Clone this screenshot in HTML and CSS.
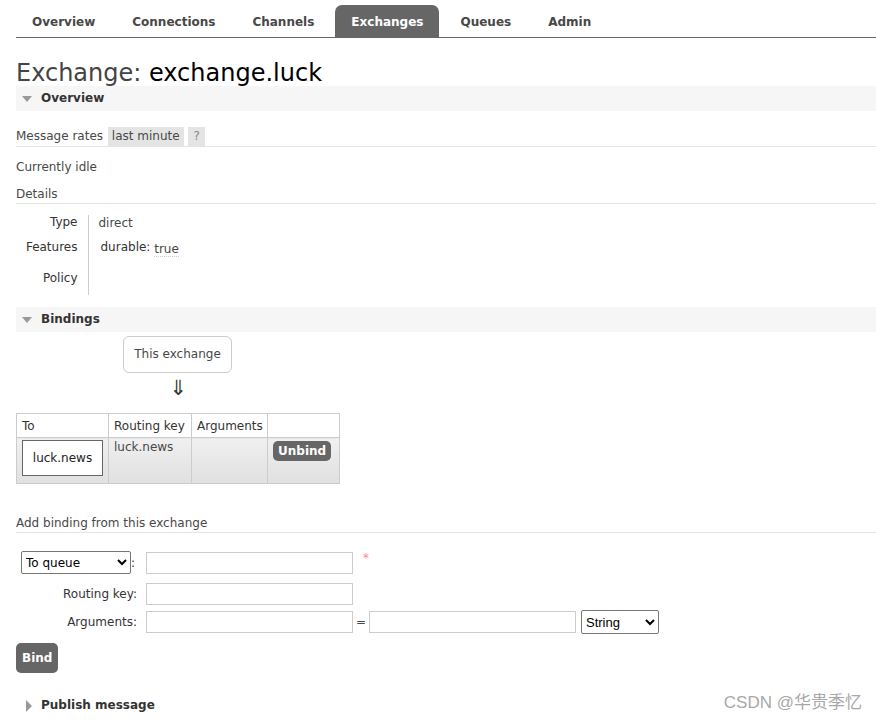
FILE: index.html
```html
<!DOCTYPE html>
<html lang="en">
<head>
    <meta charset="UTF-8">
    <title>RabbitMQ Management - Exchange: exchange.luck</title>
    <link rel="stylesheet" href="styles.css">
</head>
<body>
    <div id="main">
        <ul class="tabs">
            <li><a href="#">Overview</a></li>
            <li><a href="#">Connections</a></li>
            <li><a href="#">Channels</a></li>
            <li class="selected"><a href="#">Exchanges</a></li>
            <li><a href="#">Queues</a></li>
            <li><a href="#">Admin</a></li>
        </ul>

        <h1>Exchange: <b>exchange.luck</b></h1>

        <div class="section">
            <h2 class="open">Overview</h2>
            <div class="hider">
                <div class="rates-head">Message rates <span class="pill">last minute</span> <span class="pill help">?</span></div>
                <p class="idle">Currently idle</p>
                <h3>Details</h3>
                <table class="facts">
                    <tr class="row-type">
                        <th>Type</th>
                        <td>direct</td>
                    </tr>
                    <tr class="row-features">
                        <th>Features</th>
                        <td><span class="feat-key">durable:</span> <abbr>true</abbr></td>
                    </tr>
                    <tr class="row-policy">
                        <th>Policy</th>
                        <td></td>
                    </tr>
                </table>
            </div>
        </div>

        <div class="section">
            <h2 class="open">Bindings</h2>
            <div class="hider">
                <div class="bindings-wrapper">
                    <p class="this-exchange">This exchange</p>
                    <p class="arrow">&#8659;</p>
                    <table class="list">
                        <thead>
                            <tr>
                                <th class="col-to">To</th>
                                <th class="col-key">Routing key</th>
                                <th class="col-args">Arguments</th>
                                <th class="col-act"></th>
                            </tr>
                        </thead>
                        <tbody>
                            <tr>
                                <td><span class="mini-box">luck.news</span></td>
                                <td>luck.news</td>
                                <td></td>
                                <td><button class="btn small">Unbind</button></td>
                            </tr>
                        </tbody>
                    </table>
                </div>

                <h3 class="add-title">Add binding from this exchange</h3>
                <form class="add-form">
                    <div class="form-row first">
                        <span class="label">
                            <select class="dest-type">
                                <option>To queue</option>
                                <option>To exchange</option>
                            </select>:
                        </span>
                        <input type="text" class="wide">
                        <span class="mand">*</span>
                    </div>
                    <div class="form-row">
                        <label class="label">Routing key:</label>
                        <input type="text" class="wide">
                    </div>
                    <div class="form-row">
                        <label class="label">Arguments:</label>
                        <input type="text" class="wide">
                        <span class="eq">=</span>
                        <input type="text" class="wide">
                        <select class="arg-type">
                            <option>String</option>
                            <option>Number</option>
                            <option>Boolean</option>
                        </select>
                    </div>
                    <button type="button" class="btn">Bind</button>
                </form>
            </div>
        </div>

        <div class="section">
            <h2 class="closed">Publish message</h2>
        </div>
    </div>

    <div class="watermark">CSDN @华贵季忆</div>
</body>
</html>
```

FILE: styles.css
```css
* {
    box-sizing: border-box;
}

body {
    margin: 0;
    font: 12px Verdana, "DejaVu Sans", sans-serif;
    color: #484848;
    background: #fff;
    position: relative;
}

#main {
    padding: 0 0 0 16px;
}

/* top tabs */
.tabs {
    list-style: none;
    margin: 5px 0 0;
    padding: 0;
    display: flex;
    gap: 5px;
    border-bottom: 1px solid #666;
}

.tabs li a {
    display: block;
    height: 32px;
    line-height: 32px;
    padding: 1px 16px 0;
    font-weight: bold;
    color: #484848;
    text-decoration: none;
    border-radius: 7px 7px 0 0;
}

.tabs li.selected a {
    background: #666;
    color: #fff;
}

h1 {
    margin: 22px 0 0;
    font-size: 24px;
    line-height: 26px;
    font-weight: normal;
    color: #444;
}

h1 b {
    font-weight: normal;
    color: #000;
}

/* collapsible sections */
h2 {
    margin: 0;
    height: 25px;
    line-height: 25px;
    padding-left: 25px;
    font-size: 12px;
    font-weight: bold;
    color: #333;
    background: #f6f6f6;
    position: relative;
}

h2::before {
    content: "";
    position: absolute;
    left: 6px;
    top: 10px;
    border-left: 5px solid transparent;
    border-right: 5px solid transparent;
    border-top: 6px solid #999;
}

h2.closed {
    background: none;
}

h2.closed::before {
    left: 10px;
    top: 7px;
    border-top: 6px solid transparent;
    border-bottom: 6px solid transparent;
    border-left: 6px solid #999;
    border-right: 0;
}

.hider {
    padding-bottom: 12px;
}

.rates-head {
    margin-top: 16px;
    height: 20px;
    line-height: 19px;
    border-bottom: 1px solid #e4e4e4;
}

.pill {
    display: inline-block;
    height: 19px;
    padding: 0 4px;
    background: #e4e4e4;
    color: #484848;
    margin-left: 1px;
}

.pill.help {
    color: #888;
    padding: 0 5px;
}

.idle {
    margin: 11px 0 0;
    line-height: 18px;
}

h3 {
    margin: 9px 0 0;
    font-size: 12px;
    font-weight: normal;
    line-height: 18px;
    border-bottom: 1px solid #e4e4e4;
}

/* detail facts */
.facts {
    margin-top: 11px;
    border-collapse: collapse;
}

.facts th {
    width: 72px;
    text-align: right;
    font-weight: normal;
    color: #333;
    padding: 0 10px 0 0;
    vertical-align: top;
    border-right: 1px solid #ccc;
}

.facts td {
    padding: 0 0 0 10px;
    vertical-align: top;
}

.row-type th, .row-type td {
    height: 24px;
}

.row-type td {
    padding-top: 1px;
}

.row-features th, .row-features td {
    height: 30px;
    padding-top: 1px;
}

.row-features td {
    padding-left: 12px;
}

.feat-key {
    color: #333;
}

.facts abbr {
    text-decoration: none;
    border-bottom: 1px dotted #ccc;
    position: relative;
    top: 2px;
}

.row-policy th, .row-policy td {
    height: 26px;
    padding-top: 2px;
}

/* bindings */
.bindings-wrapper {
    margin-top: 4px;
}

.this-exchange {
    margin: 0 0 0 107px;
    width: 109px;
    height: 37px;
    line-height: 35px;
    text-align: center;
    border: 1px solid #ccc;
    border-radius: 6px;
}

.arrow {
    margin: 0 0 0 153px;
    width: 18px;
    text-align: center;
    font-size: 21px;
    line-height: 30px;
    height: 40px;
    color: #333;
}

table.list {
    border-collapse: collapse;
    border: 1px solid #ccc;
}

table.list th {
    font-weight: normal;
    text-align: left;
    height: 24px;
    padding: 0 4px 0 5px;
    color: #333;
    border: 1px solid #ccc;
    background: #fff;
    white-space: nowrap;
}

.col-to { width: 92px; }
.col-key { width: 83px; }
.col-args { width: 76px; }
.col-act { width: 72px; }

table.list td {
    height: 46px;
    padding: 2px 5px;
    vertical-align: top;
    border: 1px solid #ccc;
    background: linear-gradient(#f0f0f0, #e0e0e0);
}

.mini-box {
    display: block;
    width: 81px;
    height: 36px;
    line-height: 34px;
    text-align: center;
    background: #fff;
    border: 1px solid #666;
    color: #222;
}

.btn {
    font: bold 12px Verdana, "DejaVu Sans", sans-serif;
    background: #666;
    color: #fff;
    border: none;
    border-radius: 5px;
    padding: 0 6px;
    height: 30px;
    cursor: pointer;
}

.btn.small {
    height: 20px;
    padding: 0 5px;
    margin-top: 1px;
}

/* add binding form */
.add-title {
    margin-top: 30px;
}

.add-form {
    margin-top: 18px;
}

.form-row {
    display: flex;
    align-items: center;
    margin-bottom: 5px;
}

.form-row.first {
    margin-bottom: 9px;
}

.label {
    width: 121px;
    margin-right: 9px;
    text-align: right;
    color: #333;
    font-weight: normal;
    white-space: nowrap;
}

.form-row.first .label {
    text-align: left;
    padding-left: 5px;
}

.add-form select {
    font: 13px Arial, "Liberation Sans", sans-serif;
    color: #000;
    height: 23px;
    border: 1px solid #767676;
    border-radius: 2px;
    background: #fff;
}

.dest-type {
    width: 110px;
    font-family: Verdana, "DejaVu Sans", sans-serif !important;
    font-size: 12px !important;
}

input.wide {
    width: 207px;
    height: 22px;
    border: 1px solid #ccc;
    font: 12px Verdana, "DejaVu Sans", sans-serif;
}

.mand {
    color: #f88;
    margin-left: 10px;
    align-self: flex-start;
}

.eq {
    width: 16px;
    text-align: center;
}

.arg-type {
    width: 78px;
    height: 24px !important;
    margin-left: 5px;
}

.add-form .btn {
    margin-top: 4px;
}

.section:last-child {
    margin-top: 8px;
}

.watermark {
    position: absolute;
    top: 688px;
    right: 14px;
    font: 17px "Liberation Sans", "Noto Sans CJK SC", sans-serif;
    color: #a8a8a8;
}
```
